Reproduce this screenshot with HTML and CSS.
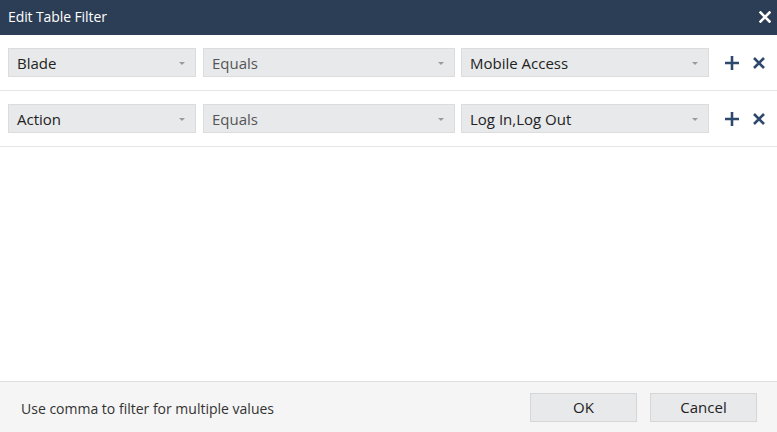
FILE: index.html
```html
<!DOCTYPE html>
<html>
<head>
<meta charset="utf-8">
<link rel="stylesheet" href="styles.css">
</head>
<body>
<div class="dialog">
  <div class="titlebar">
    <span class="title">Edit Table Filter</span>
    <svg class="close" width="12" height="12" viewBox="0 0 12 12"><path d="M1.5 1.5 L10.5 10.5 M10.5 1.5 L1.5 10.5" stroke="#fff" stroke-width="2.6" stroke-linecap="square"/></svg>
  </div>
  <div class="rows">
    <div class="row">
      <div class="select s1"><span>Blade</span><i class="caret"></i></div>
      <div class="select s2"><span class="muted">Equals</span><i class="caret"></i></div>
      <div class="select s3"><span>Mobile Access</span><i class="caret"></i></div>
      <div class="actions">
        <svg width="16" height="16" viewBox="0 0 16 16"><path d="M8 1 V15 M1 8 H15" stroke="#2d4a6e" stroke-width="2.6"/></svg>
        <svg width="14" height="14" viewBox="0 0 14 14"><path d="M2 2 L12 12 M12 2 L2 12" stroke="#2d4a6e" stroke-width="2.6"/></svg>
      </div>
    </div>
    <div class="row">
      <div class="select s1"><span>Action</span><i class="caret"></i></div>
      <div class="select s2"><span class="muted">Equals</span><i class="caret"></i></div>
      <div class="select s3"><span>Log In,Log Out</span><i class="caret"></i></div>
      <div class="actions">
        <svg width="16" height="16" viewBox="0 0 16 16"><path d="M8 1 V15 M1 8 H15" stroke="#2d4a6e" stroke-width="2.6"/></svg>
        <svg width="14" height="14" viewBox="0 0 14 14"><path d="M2 2 L12 12 M12 2 L2 12" stroke="#2d4a6e" stroke-width="2.6"/></svg>
      </div>
    </div>
  </div>
  <div class="footer">
    <span class="hint">Use comma to filter for multiple values</span>
    <div class="buttons">
      <button class="btn">OK</button>
      <button class="btn">Cancel</button>
    </div>
  </div>
</div>
</body>
</html>
```
FILE: styles.css
```css
html, body {
  margin: 0;
  padding: 0;
  background: #ffffff;
}
body {
  font-family: "Open Sans", "Noto Sans", sans-serif;
  font-size: 14px;
  color: #222;
}
.dialog {
  width: 777px;
  height: 432px;
  display: flex;
  flex-direction: column;
}
.titlebar {
  height: 35px;
  flex: none;
  background: #2c3e55;
  color: #fff;
  display: flex;
  align-items: center;
  justify-content: space-between;
  padding: 0 6px 0 8px;
  box-sizing: border-box;
}
.title {
  font-size: 14px;
  letter-spacing: -0.1px;
  margin-top: -2px;
}
.close {
  margin-top: -2px;
}
.rows {
  flex: 1;
}
.row {
  height: 55px;
  border-bottom: 1px solid #e4e4e4;
  display: flex;
  align-items: center;
  padding: 0 0 0 8px;
}
.select {
  height: 29px;
  box-sizing: border-box;
  background: #e8e9eb;
  border: 1px solid #dcdcdc;
  display: flex;
  align-items: center;
  justify-content: space-between;
  padding: 0 10px 0 8px;
  font-size: 15px;
}
.select span {
  margin-top: 1px;
}
.select .muted {
  color: #555;
}
.s1 { width: 188px; margin-right: 7px; }
.s2 { width: 252px; margin-right: 6px; }
.s3 { width: 248px; }
.caret {
  width: 0;
  height: 0;
  border-left: 3px solid transparent;
  border-right: 3px solid transparent;
  border-top: 3px solid #9a9a9a;
  margin-top: 1px;
}
.actions {
  display: flex;
  align-items: center;
  gap: 12px;
  margin-left: 15px;
}
.footer {
  height: 50px;
  flex: none;
  border-top: 1px solid #dedede;
  background: #f5f5f5;
  display: flex;
  align-items: center;
  justify-content: space-between;
  padding: 0 20px 0 21px;
}
.hint {
  font-size: 14px;
  color: #333;
  margin-top: 3px;
}
.buttons {
  display: flex;
  gap: 13px;
}
.btn {
  width: 107px;
  height: 29px;
  background: #e8e9eb;
  border: 1px solid #d6d6d6;
  font-family: "Open Sans", "Noto Sans", sans-serif;
  font-size: 15px;
  color: #222;
  padding: 0;
}
```
